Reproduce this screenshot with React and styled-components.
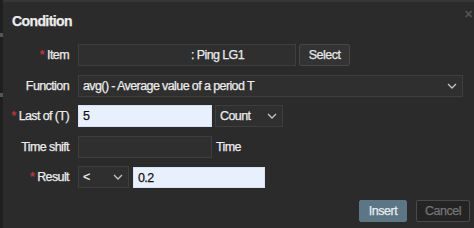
import React from "react";
import styled, { createGlobalStyle } from "styled-components";

const FONT = `"Liberation Sans", Arial, sans-serif`;

const Global = createGlobalStyle`
  html, body { margin: 0; padding: 0; background: #2b2b2b; }
  body {
    font-family: ${FONT};
    font-size: 12.5px;
    letter-spacing: -0.6px;
    color: #e8e8e8;
    -webkit-text-stroke: 0.25px currentColor;
  }
`;

const Page = styled.div`
  display: flex;
  width: 474px;
  height: 228px;
  overflow: hidden;
`;

const Edge = styled.div`
  width: 3px;
  background: #1f1f1f;
  display: flex;
  flex-direction: column;
  gap: 56px;
  padding-top: 33px;
  box-sizing: border-box;
`;

const Mark = styled.div`
  width: 3px;
  height: 4px;
  background: #555;
`;

const Dialog = styled.div`
  flex: 1;
  position: relative;
  background: #2b2b2b;
  border-top: 2px solid #363636;
  box-sizing: border-box;
  display: flex;
  flex-direction: column;
`;

const Title = styled.h2`
  margin: 0;
  padding: 11px 0 0 9px;
  height: 31px;
  box-sizing: border-box;
  font-size: 14px;
  letter-spacing: -0.6px;
  font-weight: bold;
  color: #ececec;
`;

const Close = styled.button`
  position: absolute;
  top: 4px;
  right: 1px;
  background: none;
  border: none;
  color: #5a5a5a;
  font-size: 15px;
  line-height: 15px;
  padding: 0;
  cursor: pointer;
  font-family: ${FONT};
`;

const Form = styled.div`
  display: grid;
  grid-template-columns: 66px 1fr;
  column-gap: 9px;
  row-gap: 8.6px;
  margin-top: 11px;
  padding-right: 11px;
`;

const Label = styled.label`
  text-align: right;
  line-height: 22px;
  white-space: nowrap;
  color: #ececec;
`;

const Star = styled.span`
  color: #c23a3a;
  margin-right: 3px;
`;

const Field = styled.div`
  display: flex;
  align-items: center;
  gap: ${p => p.$gap || 3}px;
  height: 22px;
`;

const DarkInput = styled.div`
  box-sizing: border-box;
  width: ${p => p.$w}px;
  height: 22px;
  background: #2f2f2f;
  border: 1px solid #3e3e3e;
  color: #ececec;
  line-height: 20px;
  padding-left: ${p => p.$indent || 4}px;
  white-space: nowrap;
`;

const LightInput = styled.div`
  box-sizing: border-box;
  width: ${p => p.$w}px;
  height: ${p => p.$h || 22}px;
  background: #e9f0fd;
  border: 1px solid #d8e2f2;
  color: #111;
  line-height: 20px;
  padding-left: 4px;
`;

const Select = styled.div`
  box-sizing: border-box;
  width: ${p => (p.$w ? `${p.$w}px` : "100%")};
  height: 22px;
  background: #2f2f2f;
  border: 1px solid #3e3e3e;
  color: #ececec;
  display: flex;
  align-items: center;
  justify-content: space-between;
  padding: 0 5px 0 4px;
  white-space: nowrap;
`;

const Chevron = () => (
  <svg width="10" height="6" viewBox="0 0 10 6">
    <path d="M1 1 L5 5 L9 1" fill="none" stroke="#c4c4c4" strokeWidth="1.3" />
  </svg>
);

const Btn = styled.button`
  box-sizing: border-box;
  height: 22px;
  padding: 0;
  font-family: ${FONT};
  font-size: 12.5px;
  letter-spacing: -0.5px;
  -webkit-text-stroke: 0.25px currentColor;
  border-radius: 2px;
  cursor: pointer;
  width: ${p => p.$w}px;
  background: ${p => p.$bg};
  color: ${p => p.$color};
  border: 1px solid ${p => p.$border};
`;

const Unit = styled.span`
  color: #ececec;
`;

const Footer = styled.div`
  display: flex;
  justify-content: flex-end;
  gap: 9px;
  padding: 12px 4px 0 0;
`;

export default function App() {
  return (
    <>
      <Global />
      <Page>
        <Edge>
          <Mark />
          <Mark />
        </Edge>
        <Dialog>
          <Title>Condition</Title>
          <Close aria-label="Close">×</Close>
          <Form>
            <Label><Star>*</Star>Item</Label>
            <Field $gap={3}>
              <DarkInput $w={218} $indent={112}>: Ping LG1</DarkInput>
              <Btn $w={51} $bg="#333333" $color="#e8e8e8" $border="#474747">Select</Btn>
            </Field>

            <Label>Function</Label>
            <Field>
              <Select>
                <span>avg() - Average value of a period T</span>
                <Chevron />
              </Select>
            </Field>

            <Label><Star>*</Star>Last of (T)</Label>
            <Field $gap={3}>
              <LightInput $w={134}>5</LightInput>
              <Select $w={68}>
                <span>Count</span>
                <Chevron />
              </Select>
            </Field>

            <Label>Time shift</Label>
            <Field $gap={4}>
              <DarkInput $w={134} />
              <Unit>Time</Unit>
            </Field>

            <Label><Star>*</Star>Result</Label>
            <Field $gap={4}>
              <Select $w={51}>
                <span>&lt;</span>
                <Chevron />
              </Select>
              <LightInput $w={132} $h={21}>0.2</LightInput>
            </Field>
          </Form>
          <Footer>
            <Btn $w={48} $bg="#5c7686" $color="#e6ecf0" $border="#5c7686">Insert</Btn>
            <Btn $w={54} $bg="#242424" $color="#747474" $border="#4a4a4a">Cancel</Btn>
          </Footer>
        </Dialog>
      </Page>
    </>
  );
}
